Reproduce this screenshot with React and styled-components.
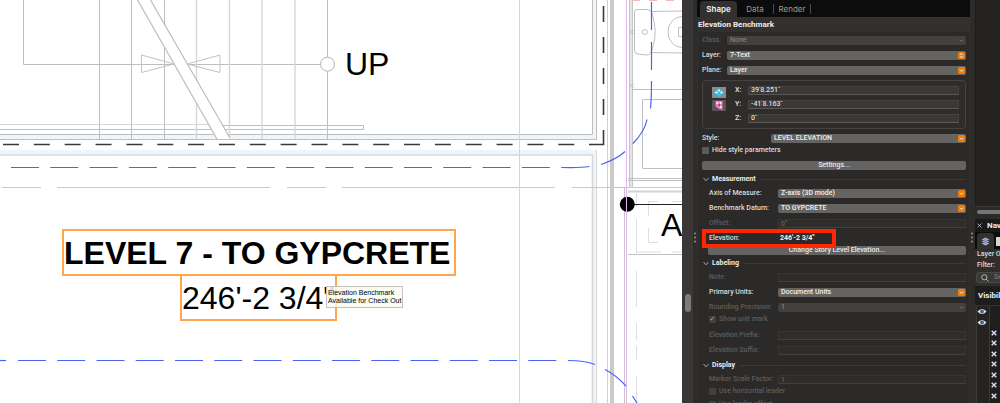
import React from 'react';
import styled, { createGlobalStyle, css } from 'styled-components';

const Global = createGlobalStyle`
  * { box-sizing: border-box; }
  body { margin: 0; background: #fff; overflow: hidden; }
  svg { flex-shrink: 0; }
`;

const ui = 'Roboto, "Liberation Sans", sans-serif';
const tabFont = 'Inter, "Liberation Sans", sans-serif';
const cad = '"Liberation Sans", Arial, sans-serif';

const Workspace = styled.div`
  display: flex;
  height: 100vh;
  overflow: hidden;
  font: 500 7px/9px ${ui};
  color: #dddcdb;
  background: #2d2c2b;
`;

/* ---------- drawing canvas ---------- */

const Canvas = styled.main`
  position: relative;
  flex: 1;
  min-width: 0;
  overflow: hidden;
  background: #fff;
  color: #000;
`;

const Plan = styled.svg`
  display: block;
  position: absolute;
  left: 0;
  top: 0;
`;

const CadText = styled.div`
  position: absolute;
  left: ${(p) => p.$x}px;
  top: ${(p) => p.$y}px;
  font: ${(p) => (p.$bold ? 700 : 400)} 32px/45px ${cad};
  white-space: nowrap;
`;

const SelectedText = styled(CadText)`
  width: ${(p) => p.$w}px;
  height: 47px;
  border: 2px solid #ffa64d;
`;

const Tooltip = styled.div`
  position: absolute;
  left: 326px;
  top: 286px;
  padding: 2px 1px;
  border: 1px solid #c4c2ba;
  background: rgba(252, 250, 240, 0.85);
  font: 7px/8px "Liberation Sans", Arial, sans-serif;
  white-space: nowrap;
`;

const Splitter = styled.div`
  display: flex;
  flex: 0 0 11px;
  padding-top: 294px;
  justify-content: center;
  background: #393837;
`;

const SplitHandle = styled.div`
  width: 6px;
  height: 18px;
  border-radius: 3px;
  background: #7c7b79;
`;

/* ---------- object info palette ---------- */

const Gutter = styled.div`
  position: relative;
  flex: 0 0 ${(p) => p.$w}px;
  background: #2d2c2b;
`;

const Grip = styled.svg`
  position: absolute;
  left: 0;
  top: 232px;
`;

const Palette = styled.aside`
  flex: 0 0 273px;
  overflow: hidden;
  background: #323130;
`;

const Tabs = styled.nav`
  display: flex;
  align-items: flex-end;
  height: 17px;
  padding-left: 3px;
  background: #0c0c0c;
`;

const Tab = styled.button`
  height: 16px;
  width: ${(p) => p.$w}px;
  padding: 0;
  border: 0;
  border-radius: 4px 4px 0 0;
  background: ${(p) => (p.$active ? '#323130' : 'transparent')};
  color: ${(p) => (p.$active ? '#f0f0f0' : '#9a9a99')};
  font: ${(p) => (p.$active ? 600 : 400)} 8px/16px ${tabFont};
`;

const TabRule = styled.i`
  width: 1px;
  height: 10px;
  margin-bottom: 3px;
  background: #4a4948;
`;

const Title = styled.h1`
  margin: 0;
  padding: 0 1px;
  height: 15px;
  font: 700 8px/15px ${ui};
  color: #ececec;
`;

const Form = styled.form`
  margin: 0 1px;
  padding: 0 3px 0 4px;
  border-top: 1px solid #2a2928;
  background: #2b2a29;
`;

const Row = styled.div`
  position: relative;
  display: flex;
  align-items: center;
  height: 15px;
  padding-left: ${(p) => (p.$nested ? 7 : 0)}px;
  color: ${(p) => (p.$off ? '#5e5d5b' : 'inherit')};
`;

const Label = styled.label`
  flex: 0 0 ${(p) => p.$w}px;
  white-space: nowrap;
`;

const control = css`
  width: 100%;
  height: 9px;
  margin: 0;
  font: 500 7px/9px ${ui};
  color: inherit;
  outline: 0;
`;

const Picker = styled.div`
  position: relative;
  flex: 1;
  display: flex;
  min-width: 0;
`;

const Select = styled.select`
  ${control}
  appearance: none;
  padding: 0 3px;
  border: 0;
  border-radius: 2px;
  opacity: 1;
  background: ${(p) => (p.disabled ? '#424140' : '#656462')};
  color: ${(p) => (p.disabled ? '#807f7d' : '#efefef')};
`;

const Chevron = styled.svg`
  position: absolute;
  right: 1px;
  top: 1px;
  pointer-events: none;
`;

const Field = styled.input`
  ${control}
  flex: 1;
  min-width: 0;
  padding: 0 2px;
  line-height: 7px;
  border: 1px solid ${(p) => (p.disabled ? '#373635' : '#454443')};
  border-bottom-color: ${(p) => (p.disabled ? '#424140' : '#5a5958')};
  background: ${(p) => (p.disabled ? '#2e2d2c' : '#3a3938')};
`;

const Coordinates = styled.fieldset`
  display: flex;
  align-items: center;
  height: 49px;
  margin: 2px 0;
  padding: 0 6px 0 9px;
  border: 1px solid #444342;
  border-radius: 4px;
  background: #2e2d2c;
`;

const PlaneIcons = styled.div`
  display: flex;
  flex-direction: column;
  align-self: flex-start;
  gap: 2px;
  margin: 6px 9px 0 0;
`;

const PlaneButton = styled.button`
  display: flex;
  padding: 0;
  border: 0;
  background: ${(p) => (p.$active ? '#8b8a88' : '#575654')};
`;

const Axes = styled.div`
  flex: 1;
  display: flex;
  flex-direction: column;
  gap: 5px;
  padding-bottom: 1px;
  font-weight: 600;
`;

const Axis = styled.div`
  display: flex;
  align-items: center;
  height: 9px;
`;

const Check = styled.div`
  display: flex;
  align-items: center;
  gap: 3px;
  height: 9px;
  margin-bottom: ${(p) => p.$after || 0}px;
  padding-left: ${(p) => (p.$nested ? 7 : 0)}px;
  color: ${(p) => (p.$off ? '#5e5d5b' : 'inherit')};
`;

const Box = styled.input`
  appearance: none;
  width: 7px;
  height: 7px;
  margin: 0;
  border-radius: 1px;
  background: ${(p) => (p.disabled ? '#424140' : '#5c5b59')};
  &:checked::before {
    content: '✓';
    display: block;
    font: 700 7px/7px "DejaVu Sans", sans-serif;
    color: #a5a4a2;
    text-align: center;
  }
`;

const Push = styled.button`
  display: block;
  width: calc(100% - ${(p) => (p.$nested ? 6 : 0)}px);
  height: 9px;
  margin: ${(p) => p.$top || 0}px 0 0 ${(p) => (p.$nested ? 6 : 0)}px;
  padding: 0;
  border: 0;
  border-radius: 2px;
  background: #646361;
  color: #e8e8e8;
  font: 500 7px/9px ${ui};
`;

const SectionHead = styled.h2`
  display: flex;
  align-items: center;
  gap: 3px;
  height: 14px;
  margin: ${(p) => p.$top || 0}px 0 0;
  padding-left: 1px;
  font: 700 7px/14px ${ui};
  color: #ececec;
  &::after {
    content: '';
    flex: 1;
    height: 1px;
    margin-left: 2px;
    background: #3b3a39;
  }
`;

const Value = styled.output`
  padding-left: 2px;
  font-weight: 700;
  color: #f2f2f2;
`;

const Highlight = styled.div`
  position: absolute;
  left: 0;
  top: -2px;
  width: 134px;
  height: 19px;
  border: 4px solid #ff2600;
  z-index: 1;
  pointer-events: none;
`;

/* ---------- navigation palette ---------- */

const Dock = styled.aside`
  display: flex;
  flex-direction: column;
  flex: 0 0 25px;
  overflow: hidden;
  white-space: nowrap;
  background: #2f2e2d;
`;

const EmptyPane = styled.div`
  height: 207px;
  border-left: 1px solid #1d1c1c;
  border-bottom: 1px solid #3c3b3a;
  background: #242322;
`;

const ScrollTrack = styled.div`
  height: 12px;
  padding: 3px 0 0 2px;
  background: #2b2a29;
  &::before {
    content: '';
    display: block;
    height: 4px;
    width: 60px;
    border-radius: 2px;
    background: #757472;
  }
`;

const DockTitle = styled.h2`
  display: flex;
  align-items: center;
  gap: 5px;
  height: 13px;
  margin: 0;
  padding-left: 2px;
  background: #1a1a1a;
  font: 700 8px/13px ${ui};
  color: #ececec;
`;

const DockTabs = styled.nav`
  display: flex;
  align-items: flex-end;
  gap: 2px;
  height: 17px;
  padding-left: 2px;
  background: #0c0c0c;
`;

const DockTab = styled.button`
  display: flex;
  flex: 0 0 ${(p) => p.$w}px;
  align-items: center;
  justify-content: center;
  height: 16px;
  padding: 0;
  border: 0;
  border-radius: 4px 4px 0 0;
  background: ${(p) => (p.$active ? '#323130' : 'transparent')};
`;

const DockLine = styled.div`
  height: 11px;
  padding-left: 2px;
  line-height: 11px;
`;

const Search = styled.div`
  display: flex;
  align-items: center;
  gap: 5px;
  flex: 0 0 11px;
  width: 80px;
  margin: 1px 0 3px 1px;
  padding-left: 4px;
  border: 1px solid #4a4948;
  border-radius: 3px;
  background: #3a3938;
  input {
    width: 50px;
    height: 9px;
    padding: 0;
    border: 0;
    background: none;
    font: 500 7px/9px ${ui};
  }
  input::placeholder { color: #777674; }
`;

const ColumnHead = styled.div`
  height: 20px;
  padding-left: 3px;
  background: #1e1d1d;
  border-bottom: 1px solid #333231;
  font: 700 8px/20px ${ui};
  color: #f0f0f0;
`;

const LayerTable = styled.ul`
  flex: 1;
  margin: 0 0 0 1px;
  padding: 0;
  list-style: none;
  border-left: 1px solid #3b3a39;
  background: linear-gradient(90deg, #242322 12px, #3b3a39 12px, #3b3a39 13px, #1f1e1e 13px);
`;

const LayerRow = styled.li`
  display: flex;
  align-items: center;
  height: 11px;
  padding-left: ${(p) => (p.$eye ? 0 : 14)}px;
  &:nth-child(even) { height: 10px; }
`;

function Arrows({ off, double: dbl }) {
  return (
    <Chevron width="7" height="7" viewBox="0 0 7 7" fill="none">
      {!off && <rect width="7" height="7" rx="1.5" fill="#f07c0c" />}
      {dbl ? (
        <path d="M2 2.8 3.5 1.4 5 2.8M2 4.2 3.5 5.6 5 4.2" stroke="#fff" strokeWidth=".8" />
      ) : (
        <path d="M2 2.8 3.5 4.3 5 2.8" stroke={off ? '#777674' : '#fff'} strokeWidth=".9" />
      )}
    </Chevron>
  );
}

function SelectRow({ id, label, value, w, nested, off, double: dbl }) {
  return (
    <Row $nested={nested} $off={off}>
      <Label htmlFor={id} $w={w}>{label}</Label>
      <Picker>
        <Select id={id} disabled={off} defaultValue={value}>
          <option>{value}</option>
        </Select>
        <Arrows off={off} double={dbl} />
      </Picker>
    </Row>
  );
}

function FieldRow({ id, label, value = '', off = true }) {
  return (
    <Row $nested $off={off}>
      <Label htmlFor={id} $w={69}>{label}</Label>
      <Field id={id} disabled={off} defaultValue={value} />
    </Row>
  );
}

function CheckRow({ id, label, checked, off, nested, after }) {
  return (
    <Check $off={off} $nested={nested} $after={after}>
      <Box type="checkbox" id={id} disabled={off} defaultChecked={checked} />
      <label htmlFor={id}>{label}</label>
    </Check>
  );
}

function Section({ children, top }) {
  return (
    <SectionHead $top={top}>
      <svg width="6" height="5" viewBox="0 0 6 5" fill="none" stroke="#aaa9a7">
        <path d="M.5 1 3 3.8 5.5 1" />
      </svg>
      {children}
    </SectionHead>
  );
}

function GripDots() {
  return (
    <Grip width="4" height="11" viewBox="0 0 4 11" fill="#a09f9d">
      <circle cx="2" cy="1.5" r=".9" />
      <circle cx="2" cy="5.5" r=".9" />
      <circle cx="2" cy="9.5" r=".9" />
    </Grip>
  );
}

function FloorPlan() {
  return (
    <Plan width="682" height="403" viewBox="0 0 682 403" fill="none">
      <g fill="#eff6fb">
        <path d="M0 135H593V0H597V139H0z" />
        <path d="M0 150H597V403H593V154H0z" />
      </g>
      <g stroke="#bebebe">
        <path d="M23.5 0V64.5H174M188 64.5H320" />
        <path d="M99.5 0V139M131.5 0V139M164.5 0V139M327.5 0V139" />
        <path d="M0 129.5H363.5V125.5H222M0 134.5H592.5V0M0 139.5H596.5V0" />
      </g>
      <g stroke="#d6d6d6">
        <path d="M196.5 0V139M229.5 0V139M262 0V139M295 0V139" strokeWidth="1.4" />
        <path d="M0 124.5H209" />
        <path d="M0 155H592.5V403" strokeWidth="1.5" />
        <path d="M596.5 150V403" />
      </g>
      <path d="M137 0 217 139H230L150 0z" fill="#fff" />
      <path d="M137.5 0 217 139M150.5 0 230 138" stroke="#bdbdbd" strokeWidth="1.2" />
      <path d="M141.5 55V72.5L174 64zM220 55V72.5L187 64z" stroke="#c2c2c2" />
      <circle cx="327.5" cy="64.2" r="7" fill="#fff" stroke="#b4b4b4" />

      <path d="M3 144.5H589" stroke="#3a3a3a" strokeWidth="1.6" strokeDasharray="16 14.85" />
      <path d="M589 144.5H603.5V130M603.5 115V99M603.5 84V68M603.5 53V37M603.5 22V6" stroke="#3a3a3a" strokeWidth="1.6" />

      <path d="M607.5 0V403" stroke="#c9ccf8" />
      <path d="M610 0H614V403H610z" fill="#cacaca" />
      <path d="M629.5 0V187M632.5 0V187M624.5 187V403" stroke="#c6c6c6" />
      <path d="M630 0H632V187H630z" fill="#e4e4e4" />

      <path
        d="M2 187.5H41M57 187.5H270M287 187.5H326M342 187.5H555M572 187.5H611M628 187.5H682"
        stroke="#c3c3fa"
      />
      <path d="M614 187.5H628" stroke="#c2c2c2" />
      <path d="M519.5 0V403" stroke="#e8c8f6" />
      <path d="M632 .5H682" stroke="#f8b8b8" strokeDasharray="8 9" />

      <g stroke="#c0c0c0">
        <path d="M637 9.5Q634.5 9.5 634.5 12V50Q634.5 54 638 54L647 55Q651 55 652.5 48Q658 32 652 13Q651 9.5 647 9.5z" />
        <circle cx="644.8" cy="32" r="2.5" />
        <path d="M652 11.5 682 11M652 52.5 682 53" />
        <path d="M682 16.5A14 15.5 0 0 0 682 47.5M682 27.5H678.500V36.500H682" />
        <path d="M630 30 634 34M634 30 630 34M630 83.5 634 87.5M634 83.5 630 87.5" />
        <path d="M632 89.5H682M682 99.5H642.5V168.5H682" />
        <path d="M628 178.5H682M628 180.5H682M628 254.5H682" />
        <path d="M628 191.5H682" strokeWidth="2" stroke="#d4d4d4" />
      </g>
      <g stroke="#dedede">
        <path d="M636.5 193V207M636.5 219V255M636.5 271V307M636.5 323V340M636.5 346V360M636.5 376V403" />
        <path d="M658 201.5H648.5V216M648.5 228V242.5H658M637 252H661M672 252H682M672 201.5H682" />
      </g>

      <g stroke="#4a63f5" strokeWidth="1.2">
        <path d="M11 167.5H562" strokeDasharray="28 11.3" />
        <path d="M562 167.5Q580 168 589.5 166.5M601 164.5Q617 159 625 151.5M633 143.5Q645 131 647 119.5M650.5 108.5Q651.5 98 651.5 81M651.5 70V42M651.5 30V2" />
        <path d="M0 360.5H6" />
        <path d="M18 360.5H562" strokeDasharray="28 11.25" />
        <path d="M568 360.5Q585 360.5 595 364.5M605 369.5Q616 375 626 386M632.5 396 637 403" />
      </g>

      <path d="M634 204.5H682" stroke="#222" />
      <circle cx="627.3" cy="204.3" r="7.5" fill="#000" />
      <path d="M626.5 0V403" stroke="#e3b5f5" />
    </Plan>
  );
}

function Eye() {
  return (
    <svg width="10" height="7" viewBox="0 0 10 7">
      <path d="M.5 3.5Q5-1.5 9.5 3.5Q5 8.5.5 3.5z" fill="#e4e8ee" />
      <circle cx="5" cy="3.5" r="1.9" fill="#42688f" />
    </svg>
  );
}

function Cross({ size = 6, color = '#d5d8ee', width = 1.5 }) {
  return (
    <svg width={size} height={size} viewBox="0 0 6 6" stroke={color} strokeWidth={width}>
      <path d="M.7.7 5.3 5.3M5.3.7.7 5.3" />
    </svg>
  );
}

export default function App() {
  return (
    <Workspace>
      <Global />
      <Canvas>
        <FloorPlan />
        <CadText $x={345} $y={42}>UP</CadText>
        <CadText $x={661} $y={203}>A</CadText>
        <SelectedText $x={62} $y={229} $w={394} $bold>LEVEL 7 - TO GYPCRETE</SelectedText>
        <SelectedText $x={180} $y={274} $w={157}>246'-2 3/4"</SelectedText>
        <Tooltip role="tooltip">
          Elevation Benchmark<br />Available for Check Out
        </Tooltip>
      </Canvas>

      <Splitter><SplitHandle /></Splitter>
      <Gutter $w={4}><GripDots /></Gutter>

      <Palette>
        <Tabs>
          <Tab type="button" $active $w={37}>Shape</Tab>
          <Tab type="button" $w={36}>Data</Tab>
          <TabRule />
          <Tab type="button" $w={36}>Render</Tab>
          <TabRule />
        </Tabs>
        <Title>Elevation Benchmark</Title>
        <Form>
          <SelectRow id="class" label="Class:" value="None" w={25} off />
          <SelectRow id="layer" label="Layer:" value="7-Text" w={25} double />
          <SelectRow id="plane" label="Plane:" value="Layer" w={25} />
          <Coordinates>
            <PlaneIcons>
              <PlaneButton type="button" $active aria-label="Layer plane">
                <svg width="14" height="11" viewBox="0 0 14 11">
                  <path d="M7 .8 12.5 5.5 7 10.200 1.500 5.500z" fill="#35bfe6" />
                  <path d="M7 2.200 8.500 3.600 7 4.800 5.500 3.600zM4.500 4.300 6 5.500 4.500 6.800 3 5.500zM9.500 4.300 11 5.500 9.500 6.800 8 5.500z" fill="#e8fbff" />
                </svg>
              </PlaneButton>
              <PlaneButton type="button" aria-label="Screen plane">
                <svg width="14" height="11" viewBox="0 0 14 11">
                  <path d="M3.500 1H10.500V10L7 9 3.500 6.500z" fill="#f07cc8" />
                  <path d="M4.500 2H6.200V4H4.500zM8 2H9.600V4H8zM8 6H9.600V8H8z" fill="#ffe3f6" />
                  <path d="M6.300 4.200H8V6H6.300z" fill="#d81b60" />
                </svg>
              </PlaneButton>
            </PlaneIcons>
            <Axes>
              <Axis><Label htmlFor="x" $w={13}>X:</Label><Field id="x" defaultValue={'39\'8.251"'} /></Axis>
              <Axis><Label htmlFor="y" $w={13}>Y:</Label><Field id="y" defaultValue={'-41\'8.163"'} /></Axis>
              <Axis><Label htmlFor="z" $w={13}>Z:</Label><Field id="z" defaultValue={'0"'} /></Axis>
            </Axes>
          </Coordinates>
          <SelectRow id="style" label="Style:" value="LEVEL ELEVATION" w={69} />
          <CheckRow id="hide" label="Hide style parameters" />
          <Push type="button" $top={6}>Settings...</Push>

          <Section top={2}>Measurement</Section>
          <SelectRow id="axis" label="Axis of Measure:" value="Z-axis (3D mode)" w={69} nested />
          <SelectRow id="datum" label="Benchmark Datum:" value="TO GYPCRETE" w={69} nested />
          <FieldRow id="offset" label="Offset:" value={'0"'} />
          <Row $nested>
            <Label htmlFor="elevation" $w={69}>Elevation:</Label>
            <Value id="elevation">246'-2 3/4"</Value>
            <Highlight />
          </Row>
          <Push type="button" $nested>Change Story Level Elevation...</Push>

          <Section top={1}>Labeling</Section>
          <FieldRow id="note" label="Note:" />
          <SelectRow id="units" label="Primary Units:" value="Document Units" w={69} nested />
          <SelectRow id="rounding" label="Rounding Precision:" value="1" w={69} nested off />
          <CheckRow id="mark" label="Show unit mark" checked off nested after={4} />
          <FieldRow id="prefix" label="Elevation Prefix:" />
          <FieldRow id="suffix" label="Elevation Suffix:" />

          <Section>Display</Section>
          <FieldRow id="scale" label="Marker Scale Factor:" value="1" />
          <CheckRow id="leader" label="Use horizontal leader" off nested after={4} />
          <CheckRow id="leader-offset" label="Use leader offset" off nested />
        </Form>
      </Palette>

      <Gutter $w={5}><GripDots /></Gutter>
      <Dock>
        <EmptyPane />
        <ScrollTrack />
        <DockTitle><Cross size={5} color="#c8c8c8" width={1} />Navigation</DockTitle>
        <DockTabs>
          <DockTab type="button" $active $w={17} aria-label="Design layers">
            <svg width="9" height="9" viewBox="0 0 9 9" fill="#b9b8e0" stroke="#50507a" strokeWidth=".5">
              <path d="M.5 6.500 4.500 4.700 8.500 6.500 4.500 8.500zM.5 4.500 4.500 2.700 8.500 4.500 4.500 6.500zM.5 2.500 4.500.6 8.500 2.500 4.500 4.500z" />
            </svg>
          </DockTab>
          <DockTab type="button" $w={9} aria-label="Sheet layers">
            <svg width="9" height="9" viewBox="0 0 9 9"><path d="M0 0H7V9H0z" fill="#d6d6d6" /></svg>
          </DockTab>
        </DockTabs>
        <DockLine>Layer Options:</DockLine>
        <DockLine>Filter:</DockLine>
        <Search>
          <svg width="8" height="8" viewBox="0 0 8 8" fill="none" stroke="#b5b4b2">
            <circle cx="3.3" cy="3.3" r="2.6" /><path d="M5.2 5.2 7.5 7.5" />
          </svg>
          <input type="search" placeholder="Search" aria-label="Search layers" />
        </Search>
        <ColumnHead>Visibility</ColumnHead>
        <LayerTable>
          <LayerRow $eye><Eye /></LayerRow>
          <LayerRow $eye><Eye /></LayerRow>
          {[0, 1, 2, 3, 4, 5, 6].map((i) => (
            <LayerRow key={i}><Cross /></LayerRow>
          ))}
        </LayerTable>
      </Dock>
    </Workspace>
  );
}
